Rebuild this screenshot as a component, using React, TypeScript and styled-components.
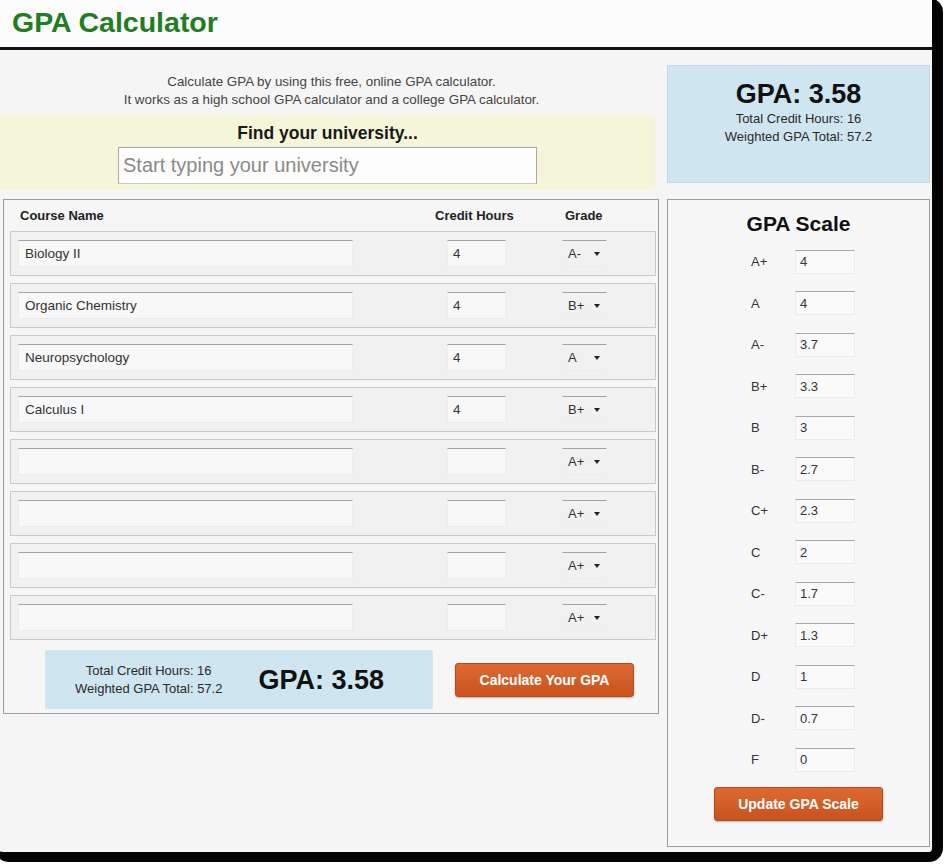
import React from 'react';
import styled, { createGlobalStyle } from 'styled-components';

const GlobalStyle = createGlobalStyle`
  html, body {
    margin: 0;
    padding: 0;
    background: #ffffff;
  }
  body {
    font-family: "Liberation Sans", Arial, sans-serif;
    color: #222;
  }
`;

const courses = [
  { name: 'Biology II', hours: '4', grade: 'A-' },
  { name: 'Organic Chemistry', hours: '4', grade: 'B+' },
  { name: 'Neuropsychology', hours: '4', grade: 'A' },
  { name: 'Calculus I', hours: '4', grade: 'B+' },
  { name: '', hours: '', grade: 'A+' },
  { name: '', hours: '', grade: 'A+' },
  { name: '', hours: '', grade: 'A+' },
  { name: '', hours: '', grade: 'A+' },
];

const scale = [
  ['A+', '4'],
  ['A', '4'],
  ['A-', '3.7'],
  ['B+', '3.3'],
  ['B', '3'],
  ['B-', '2.7'],
  ['C+', '2.3'],
  ['C', '2'],
  ['C-', '1.7'],
  ['D+', '1.3'],
  ['D', '1'],
  ['D-', '0.7'],
  ['F', '0'],
];

const App = () => {
  return (
    <>
      <GlobalStyle />
      <Frame>
        <Header>
          <Title>GPA Calculator</Title>
        </Header>

        <Body>
          <LeftColumn>
            <Intro>
              Calculate GPA by using this free, online GPA calculator.
              <br />
              It works as a high school GPA calculator and a college GPA calculator.
            </Intro>

            <SearchBand>
              <SearchLabel>Find your university...</SearchLabel>
              <SearchInput placeholder="Start typing your university" />
            </SearchBand>

            <CourseTable>
              <TableHead>
                <span>Course Name</span>
                <span>Credit Hours</span>
                <span>Grade</span>
              </TableHead>

              <Rows>
                {courses.map((c, i) => (
                  <CourseRow key={i}>
                    <NameInput defaultValue={c.name} />
                    <HoursInput defaultValue={c.hours} />
                    <GradeSelect>
                      {c.grade}
                      <Caret />
                    </GradeSelect>
                  </CourseRow>
                ))}
              </Rows>

              <TableFoot>
                <ResultBar>
                  <Totals>
                    Total Credit Hours: 16
                    <br />
                    Weighted GPA Total: 57.2
                  </Totals>
                  <GpaValue>GPA: 3.58</GpaValue>
                </ResultBar>
                <OrangeButton $width={179}>Calculate Your GPA</OrangeButton>
              </TableFoot>
            </CourseTable>
          </LeftColumn>

          <RightColumn>
            <SummaryCard>
              <GpaValue>GPA: 3.58</GpaValue>
              <Totals>
                Total Credit Hours: 16
                <br />
                Weighted GPA Total: 57.2
              </Totals>
            </SummaryCard>

            <ScaleCard>
              <ScaleTitle>GPA Scale</ScaleTitle>
              <ScaleList>
                {scale.map(([grade, points]) => (
                  <ScaleRow key={grade}>
                    <ScaleLabel>{grade}</ScaleLabel>
                    <ScaleInput defaultValue={points} />
                  </ScaleRow>
                ))}
              </ScaleList>
              <OrangeButton $width={169}>Update GPA Scale</OrangeButton>
            </ScaleCard>
          </RightColumn>
        </Body>
      </Frame>
    </>
  );
};

/* window panel with its dark edge on the right and bottom */
const Frame = styled.div`
  margin: -2px 0 0 -4px;
  width: 947px;
  height: 864px;
  box-sizing: border-box;
  background: #f5f5f5;
  border-right: 11px solid #030303;
  border-bottom: 10px solid #030303;
  border-radius: 0 14px 14px 12px;
`;

const Header = styled.div`
  height: 52px;
  box-sizing: border-box;
  padding: 7px 0 0 16px;
  background: #fbfbfb;
  border-bottom: 3px solid #111;
  border-top-right-radius: 3px;
`;

const Title = styled.h1`
  margin: 0;
  font-size: 28.5px;
  line-height: 34px;
  font-weight: bold;
  color: #1f7d22;
`;

const Body = styled.div`
  display: grid;
  grid-template-columns: 659px 263px;
  column-gap: 8px;
  padding: 15px 0 0 4px;
`;

const LeftColumn = styled.div`
  display: flex;
  flex-direction: column;
`;

const Intro = styled.p`
  margin: 8px 0 0;
  height: 42px;
  text-align: center;
  font-size: 13.4px;
  line-height: 18px;
  color: #444;
  padding-left: 4px;
`;

const SearchBand = styled.div`
  width: 655px;
  height: 75px;
  background: #f5f6d9;
  display: flex;
  flex-direction: column;
  align-items: center;
  padding-top: 7px;
  box-sizing: border-box;
`;

const SearchLabel = styled.div`
  font-size: 17.5px;
  font-weight: bold;
  line-height: 22px;
  color: #1a1a1a;
  margin-bottom: 3px;
`;

const SearchInput = styled.input`
  width: 419px;
  height: 37px;
  box-sizing: border-box;
  border: 1px solid #a8a8a8;
  border-bottom-color: #c8c8c8;
  background: #fdfdfd;
  padding: 0 4px;
  font-family: "Liberation Sans", Arial, sans-serif;
  font-size: 20px;
  outline: none;

  &::placeholder {
    color: #8a8a8a;
  }
`;

const CourseTable = styled.div`
  margin: 9px 0 0 3px;
  width: 656px;
  height: 515px;
  box-sizing: border-box;
  border: 1px solid #9c9c9c;
  background: #f6f6f6;
  padding: 0 2px 0 6px;
  display: flex;
  flex-direction: column;
`;

const TableHead = styled.div`
  display: grid;
  grid-template-columns: 415px 130px 1fr;
  padding-left: 10px;
  height: 31px;
  align-items: center;
  font-size: 13px;
  font-weight: bold;
  color: #222;
`;

const Rows = styled.div`
  display: flex;
  flex-direction: column;
  gap: 7px;
`;

const CourseRow = styled.div`
  height: 45px;
  box-sizing: border-box;
  border: 1px solid #c9c9c9;
  background: #f1f1f1;
  display: grid;
  grid-template-columns: 335px 59px 45px;
  align-items: center;
  padding-left: 7px;

  & > :nth-child(2) {
    margin-left: 94px;
  }
  & > :nth-child(3) {
    margin-left: 150px;
  }
`;

const fieldBase = `
  box-sizing: border-box;
  height: 27px;
  border: 1px solid #ededed;
  border-top-color: #a3a3a3;
  background: #f8f8f8;
  font-family: "Liberation Sans", Arial, sans-serif;
  font-size: 13.5px;
  color: #333;
  outline: none;
`;

const NameInput = styled.input`
  ${fieldBase}
  width: 335px;
  padding: 0 6px;
`;

const HoursInput = styled.input`
  ${fieldBase}
  width: 59px;
  padding: 0 5px;
`;

const GradeSelect = styled.div`
  ${fieldBase}
  width: 45px;
  display: flex;
  align-items: center;
  justify-content: space-between;
  padding: 0 6px 0 5px;
  border-left-color: transparent;
  border-right-color: transparent;
  background: transparent;
  font-size: 13px;
`;

const Caret = styled.span`
  width: 0;
  height: 0;
  border-left: 3.5px solid transparent;
  border-right: 3.5px solid transparent;
  border-top: 4px solid #222;
`;

const TableFoot = styled.div`
  display: flex;
  align-items: center;
  margin-top: 10px;
  padding-left: 35px;
  gap: 22px;
`;

const ResultBar = styled.div`
  width: 388px;
  height: 59px;
  background: #cfe5ef;
  border-radius: 2px;
  display: flex;
  align-items: center;
  padding-left: 30px;
  box-sizing: border-box;
  gap: 36px;
`;

const Totals = styled.div`
  font-size: 13px;
  line-height: 18px;
  text-align: center;
  color: #2a2a2a;
`;

const GpaValue = styled.div`
  font-size: 27px;
  font-weight: bold;
  line-height: 30px;
  color: #111;
`;

const OrangeButton = styled.button<{ $width: number }>`
  width: ${(p) => p.$width}px;
  height: 34px;
  border: 1px solid #b34a1c;
  border-radius: 3px;
  background: linear-gradient(#de6a30, #c9521f);
  color: #fff;
  font-family: "Liberation Sans", Arial, sans-serif;
  font-size: 14px;
  font-weight: bold;
  box-shadow: 0 1px 2px rgba(0, 0, 0, 0.25);
  cursor: pointer;
`;

const RightColumn = styled.div`
  display: flex;
  flex-direction: column;
  gap: 16px;
`;

const SummaryCard = styled.div`
  height: 118px;
  background: #cfe5ef;
  border: 1px solid #c3dbe6;
  box-sizing: border-box;
  display: flex;
  flex-direction: column;
  align-items: center;
  padding-top: 13px;
  gap: 1px;
`;

const ScaleCard = styled.div`
  height: 648px;
  box-sizing: border-box;
  border: 1px solid #9c9c9c;
  background: #f7f7f7;
  display: flex;
  flex-direction: column;
  align-items: center;
  padding-top: 12px;
`;

const ScaleTitle = styled.h2`
  margin: 0;
  font-size: 21px;
  line-height: 24px;
  font-weight: bold;
  color: #111;
`;

const ScaleList = styled.div`
  margin-top: 5px;
  margin-bottom: 6px;
  display: flex;
  flex-direction: column;
  align-self: stretch;
  padding-left: 83px;
`;

const ScaleRow = styled.div`
  height: 41.5px;
  display: grid;
  grid-template-columns: 44px 60px;
  align-items: center;
`;

const ScaleLabel = styled.span`
  font-size: 13px;
  color: #333;
`;

const ScaleInput = styled.input`
  box-sizing: border-box;
  width: 60px;
  height: 24px;
  border: 1px solid #ececec;
  border-top-color: #a8a8a8;
  background: #fafafa;
  padding: 0 4px;
  font-family: "Liberation Sans", Arial, sans-serif;
  font-size: 13px;
  color: #333;
  outline: none;
`;

export default App;
